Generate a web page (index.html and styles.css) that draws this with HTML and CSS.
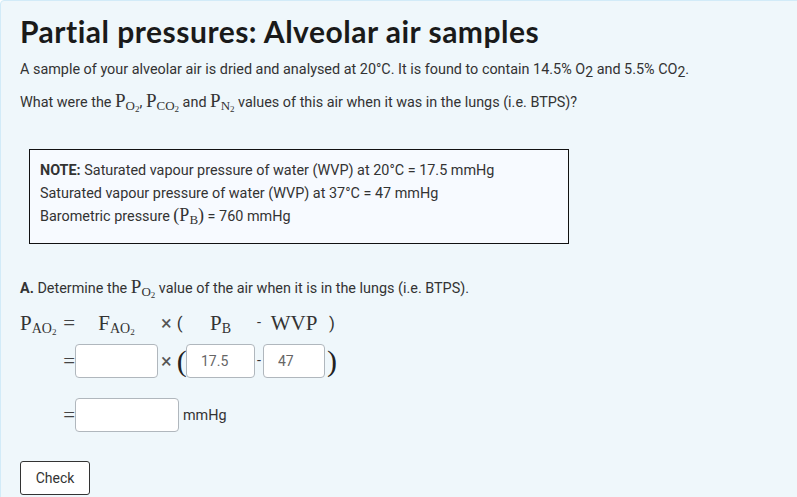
FILE: index.html
```html
<!DOCTYPE html>
<html lang="en">
<head>
    <meta charset="UTF-8">
    <meta name="viewport" content="width=device-width, initial-scale=1.0">
    <title>Partial pressures: Alveolar air samples</title>
    <link rel="stylesheet" href="styles.css">
</head>
<body>
    <div class="page">
        <h1 class="title">Partial pressures: Alveolar air samples</h1>

        <p class="text">A sample of your alveolar air is dried and analysed at 20°C. It is found to contain 14.5% O<sub>2</sub> and 5.5% CO<sub>2</sub>.</p>
        <p class="text">What were the <span class="m">P<sub>O<sub>2</sub></sub></span>, <span class="m">P<sub>CO<sub>2</sub></sub></span> and <span class="m">P<sub>N<sub>2</sub></sub></span> values of this air when it was in the lungs (i.e. BTPS)?</p>

        <div class="note">
            <div><b>NOTE:</b> Saturated vapour pressure of water (WVP) at 20°C = 17.5 mmHg</div>
            <div>Saturated vapour pressure of water (WVP) at 37°C = 47 mmHg</div>
            <div>Barometric pressure <span class="m">(P<sub>B</sub>)</span> = 760 mmHg</div>
        </div>

        <p class="text part"><b>A.</b> Determine the <span class="m">P<sub>O<sub>2</sub></sub></span> value of the air when it is in the lungs (i.e. BTPS).</p>

        <div class="eq">
            <span class="cell head m"><span>P<sub>AO<sub>2</sub></sub></span><span class="eqs">=</span></span>
            <span class="cell mid m"><span>F<sub>AO<sub>2</sub></sub></span></span>
            <span class="cell op"><span class="times">×</span>(</span>
            <span class="cell mid m"><span>P<sub>B</sub></span></span>
            <span class="cell minus">-</span>
            <span class="cell mid m">WVP</span>
            <span class="cell paren">)</span>

            <span class="cell lead m"><span class="eqs">=</span></span>
            <input class="box" type="text">
            <span class="cell op"><span class="times">×</span><span class="big">(</span></span>
            <input class="box" type="text" value="17.5">
            <span class="cell minus">-</span>
            <input class="box" type="text" value="47">
            <span class="cell paren big">)</span>
        </div>

        <div class="result">
            <span class="cell lead m"><span class="eqs">=</span></span>
            <input class="box wide" type="text">
            <span class="unit">mmHg</span>
        </div>

        <button class="check">Check</button>
    </div>
</body>
</html>
```

FILE: styles.css
```css
body {
    margin: 0;
    font-family: Roboto, "Liberation Sans", sans-serif;
    font-size: 14.4px;
    color: #333;
    background: #fff;
}

.page {
    width: 820px;
    min-height: 520px;
    box-sizing: border-box;
    padding: 13px 20px 0 19px;
    background: #eff7fb;
    border: 1px solid #d2ebf8;
    border-radius: 4px;
}

.title {
    margin: 0 0 10px 0;
    font-family: Lato, "Open Sans", sans-serif;
    font-size: 30px;
    font-weight: 700;
    letter-spacing: 0.5px;
    color: #1a1a1a;
    line-height: 34px;
}

.text {
    margin: 0 0 9px 0;
    line-height: 24px;
}

.text sub {
    font-size: 14px;
    line-height: 0;
    vertical-align: -3px;
}

.m {
    font-family: "Liberation Serif", "DejaVu Serif", serif;
    font-size: 19px;
    line-height: 0;
}

.m sub {
    font-size: 13px;
    line-height: 0;
    vertical-align: -3px;
}

.m sub sub {
    font-size: 9px;
    vertical-align: -2px;
}

.note {
    margin: 34px 0 0 9px;
    width: 540px;
    height: 95px;
    box-sizing: border-box;
    padding: 9px 10px;
    background: #f7faff;
    border: 1px solid #111;
    line-height: 23px;
}

.note .m {
    font-size: 18px;
}

.part {
    margin-top: 33px;
}

.eq {
    display: grid;
    grid-template-columns: 55px 83px 28px 69px 8px 62px 20px;
    row-gap: 8px;
    align-items: center;
    margin-top: 8px;
}

.cell {
    display: flex;
    align-items: center;
    height: 26px;
    line-height: 26px;
}

.eq .m {
    font-size: 21px;
}

.eq .m sub {
    font-size: 14px;
}

.eq .m sub sub {
    font-size: 9px;
}

.head {
    justify-content: space-between;
}

.lead {
    justify-content: flex-end;
}

.eqs {
    font-size: 21px;
    color: #444;
}

.mid {
    justify-content: center;
}

.op {
    font-size: 17px;
    padding-left: 3px;
    gap: 5px;
}

.times {
    font-size: 20px;
    color: #555;
}

.big {
    font-size: 30px;
    font-family: "Liberation Serif", serif;
    color: #222;
}

.minus {
    justify-content: center;
}

.paren {
    padding-left: 4px;
    font-size: 17px;
}

.paren.big {
    padding-left: 2px;
    font-size: 30px;
}

.box {
    width: 100%;
    height: 34px;
    box-sizing: border-box;
    padding: 0 14px;
    background: #fff;
    border: 1px solid #b0b7bd;
    border-radius: 4px;
    font-family: Roboto, sans-serif;
    font-size: 14px;
    color: #666;
}

.result {
    display: flex;
    align-items: center;
    margin-top: 20px;
}

.result .lead {
    width: 55px;
}

.wide {
    width: 104px;
}

.unit {
    margin-left: 4px;
}

.check {
    display: block;
    margin-top: 29px;
    width: 70px;
    height: 34px;
    background: #fff;
    border: 1px solid #333;
    border-radius: 3px;
    font-family: Roboto, sans-serif;
    font-size: 14px;
    color: #333;
}
```
